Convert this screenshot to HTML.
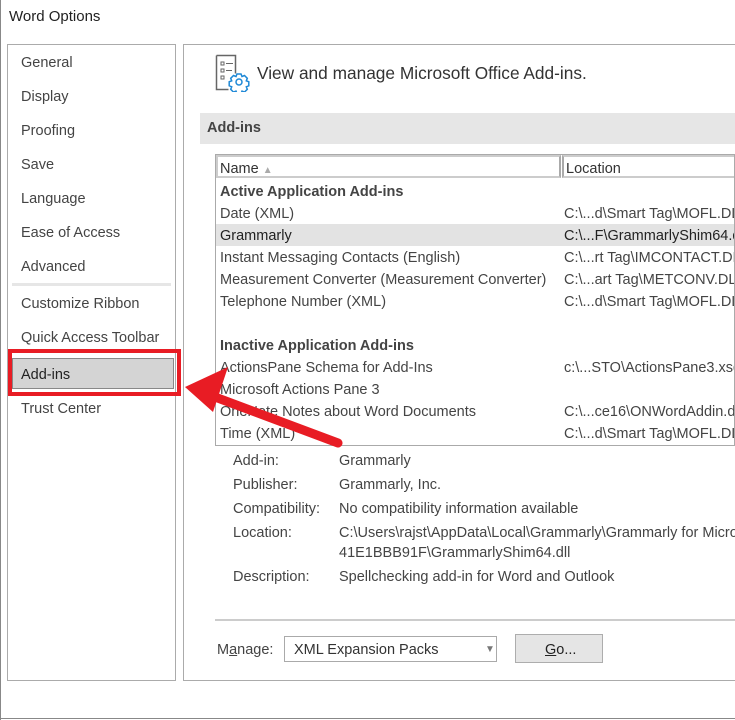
<!DOCTYPE html>
<html><head><meta charset="utf-8"><style>
*{margin:0;padding:0;box-sizing:border-box}
body{width:735px;height:720px;background:#fff;font-family:"Liberation Sans",sans-serif;font-size:14.5px;color:#444;position:relative;overflow:hidden}
.a{position:absolute;white-space:nowrap}
.nav{left:21px}
.r{left:220px}
.loc{left:564px}
.lb{left:233px}.vl{left:339px}
.t{top:1px;position:relative}
</style></head><body>
<div class="a" style="left:0;top:0;width:1px;height:720px;background:#888"></div>
<div class="a" style="left:0;top:718px;width:735px;height:1px;background:#888"></div>
<div class="a" style="left:9px;top:8px;font-size:15px;color:#222">Word Options</div>
<div class="a" style="left:7px;top:44px;width:169px;height:637px;border:1px solid #ababab"></div>
<div class="a" style="left:183px;top:44px;width:560px;height:637px;border:1px solid #ababab"></div>

<div class="a nav" style="top:55px">General</div>
<div class="a nav" style="top:89px">Display</div>
<div class="a nav" style="top:123px">Proofing</div>
<div class="a nav" style="top:157px">Save</div>
<div class="a nav" style="top:191px">Language</div>
<div class="a nav" style="top:225px">Ease of Access</div>
<div class="a nav" style="top:259px">Advanced</div>
<div class="a" style="left:12px;top:283px;width:159px;height:3px;background:#e6e6e6"></div>
<div class="a nav" style="top:296px">Customize Ribbon</div>
<div class="a nav" style="top:330px">Quick Access Toolbar</div>
<div class="a" style="left:12px;top:358px;width:162px;height:31px;background:#d4d4d4;border:1px solid #888"></div>
<div class="a nav" style="top:367px;color:#222">Add-ins</div>
<div class="a" style="left:8px;top:349px;width:173px;height:47px;border:4px solid #e81c24"></div>
<div class="a nav" style="top:401px">Trust Center</div>

<svg class="a" style="left:215px;top:54px" width="36" height="38" viewBox="0 0 36 38">
<path d="M1.5 1.5h19v18M1.5 1.5v34h12" fill="none" stroke="#666" stroke-width="1.5"/>
<rect x="6" y="8" width="3" height="3" fill="none" stroke="#666"/><path d="M11 9.5h7" stroke="#666"/>
<rect x="6" y="15" width="3" height="3" fill="none" stroke="#666"/><path d="M11 16.5h6" stroke="#666"/>
<rect x="6" y="22" width="3" height="3" fill="none" stroke="#666"/>
<g transform="translate(24,28)" fill="none" stroke="#1e88d6" stroke-width="1.5"><circle r="3"/><path d="M-2 -8h4l1 2.5 2.5-1 2.8 2.8-1 2.5 2.5 1v4l-2.5 1 1 2.5-2.8 2.8-2.5-1-1 2.5h-4l-1-2.5-2.5 1-2.8-2.8 1-2.5-2.5-1v-4l2.5-1-1-2.5 2.8-2.8 2.5 1z"/></g>
</svg>
<div class="a" style="left:257px;top:63px;font-size:17.3px;color:#333">View and manage Microsoft Office Add-ins.</div>

<div class="a" style="left:200px;top:113px;width:535px;height:31px;background:#e6e6e6"></div>
<div class="a" style="left:207px;top:120px;font-weight:bold;color:#444">Add-ins</div>

<div class="a" style="left:215px;top:154px;width:530px;height:292px;border:1px solid #aaa"></div>
<div class="a" style="left:216px;top:155px;width:345px;height:23px;border:2px solid #ccc;border-right:2px solid #aaa"></div>
<div class="a" style="left:562px;top:155px;width:180px;height:23px;border:2px solid #ccc;border-left:2px solid #aaa"></div>
<div class="a r" style="top:161px;color:#333">Name <span style="color:#aaa;font-size:10px">▲</span></div>
<div class="a" style="left:566px;top:161px;color:#333">Location</div>
<div class="a" style="left:216px;top:224px;width:518px;height:22px;background:#e3e3e3"></div>
<div class="a r" style="top:184px;font-weight:bold">Active Application Add-ins</div>
<div class="a r" style="top:206px">Date (XML)</div><div class="a loc" style="top:206px">C:\...d\Smart Tag\MOFL.DLL</div>
<div class="a r" style="top:228px;color:#222">Grammarly</div><div class="a loc" style="top:228px;color:#222">C:\...F\GrammarlyShim64.dll</div>
<div class="a r" style="top:250px">Instant Messaging Contacts (English)</div><div class="a loc" style="top:250px">C:\...rt Tag\IMCONTACT.DLL</div>
<div class="a r" style="top:272px">Measurement Converter (Measurement Converter)</div><div class="a loc" style="top:272px">C:\...art Tag\METCONV.DLL</div>
<div class="a r" style="top:294px">Telephone Number (XML)</div><div class="a loc" style="top:294px">C:\...d\Smart Tag\MOFL.DLL</div>
<div class="a r" style="top:338px;font-weight:bold">Inactive Application Add-ins</div>
<div class="a r" style="top:360px">ActionsPane Schema for Add-Ins</div><div class="a loc" style="top:360px">c:\...STO\ActionsPane3.xsd</div>
<div class="a r" style="top:382px">Microsoft Actions Pane 3</div>
<div class="a r" style="top:404px">OneNote Notes about Word Documents</div><div class="a loc" style="top:404px">C:\...ce16\ONWordAddin.dll</div>
<div class="a r" style="top:426px">Time (XML)</div><div class="a loc" style="top:426px">C:\...d\Smart Tag\MOFL.DLL</div>
<div class="a" style="left:734px;top:154px;width:1px;height:292px;background:#aaa"></div>

<div class="a lb" style="top:453px">Add-in:</div><div class="a vl" style="top:453px">Grammarly</div>
<div class="a lb" style="top:477px">Publisher:</div><div class="a vl" style="top:477px">Grammarly, Inc.</div>
<div class="a lb" style="top:501px">Compatibility:</div><div class="a vl" style="top:501px">No compatibility information available</div>
<div class="a lb" style="top:525px">Location:</div><div class="a vl" style="top:525px">C:\Users\rajst\AppData\Local\Grammarly\Grammarly for Microsoft</div>
<div class="a vl" style="top:545px">41E1BBB91F\GrammarlyShim64.dll</div>
<div class="a lb" style="top:569px">Description:</div><div class="a vl" style="top:569px">Spellchecking add-in for Word and Outlook</div>

<div class="a" style="left:215px;top:619px;width:520px;height:2px;background:#ccc"></div>
<div class="a" style="left:217px;top:642px">M<u>a</u>nage:</div>
<div class="a" style="left:284px;top:636px;width:213px;height:26px;border:1px solid #aaa"></div>
<div class="a" style="left:294px;top:642px;color:#333">XML Expansion Packs</div>
<div class="a" style="left:485px;top:644px;color:#777;font-size:10px">▼</div>
<div class="a" style="left:515px;top:634px;width:88px;height:29px;background:#e5e5e5;border:1px solid #adadad"></div>
<div class="a" style="left:545px;top:642px;color:#222"><u>G</u>o...</div>

<svg class="a" style="left:0;top:0" width="735" height="720">
<line x1="338" y1="443" x2="215" y2="397" stroke="#e81c24" stroke-width="9" stroke-linecap="round"/>
<polygon points="185,387 228,367 213,412" fill="#e81c24"/>
</svg>
</body></html>
